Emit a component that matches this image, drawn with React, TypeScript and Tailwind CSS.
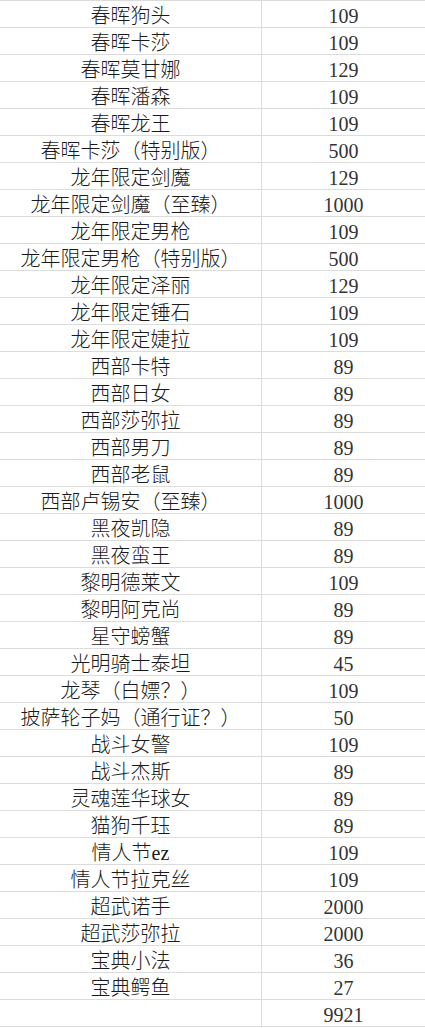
import React from "react";

const rows: [string, string][] = [
  ["春晖狗头", "109"],
  ["春晖卡莎", "109"],
  ["春晖莫甘娜", "129"],
  ["春晖潘森", "109"],
  ["春晖龙王", "109"],
  ["春晖卡莎（特别版）", "500"],
  ["龙年限定剑魔", "129"],
  ["龙年限定剑魔（至臻）", "1000"],
  ["龙年限定男枪", "109"],
  ["龙年限定男枪（特别版）", "500"],
  ["龙年限定泽丽", "129"],
  ["龙年限定锤石", "109"],
  ["龙年限定婕拉", "109"],
  ["西部卡特", "89"],
  ["西部日女", "89"],
  ["西部莎弥拉", "89"],
  ["西部男刀", "89"],
  ["西部老鼠", "89"],
  ["西部卢锡安（至臻）", "1000"],
  ["黑夜凯隐", "89"],
  ["黑夜蛮王", "89"],
  ["黎明德莱文", "109"],
  ["黎明阿克尚", "89"],
  ["星守螃蟹", "89"],
  ["光明骑士泰坦", "45"],
  ["龙琴（白嫖？）", "109"],
  ["披萨轮子妈（通行证？）", "50"],
  ["战斗女警", "109"],
  ["战斗杰斯", "89"],
  ["灵魂莲华球女", "89"],
  ["猫狗千珏", "89"],
  ["情人节ez", "109"],
  ["情人节拉克丝", "109"],
  ["超武诺手", "2000"],
  ["超武莎弥拉", "2000"],
  ["宝典小法", "36"],
  ["宝典鳄鱼", "27"],
  ["", "9921"],
];

export default function App() {
  return (
    <div lang="zh-CN" className="w-[425px] h-[1028px] bg-white overflow-hidden">
      <div className="border-t border-[#dcdcdc]">
        {rows.map(([name, price], i) => (
          <div
            key={i}
            className="grid grid-cols-[262px_1fr] h-[27px] border-b border-[#dcdcdc]"
          >
            <div
              className="flex items-center justify-center pt-[4px] border-r border-[#dcdcdc] text-[20px] leading-[22px] text-[#1a1a1a] font-light whitespace-nowrap"
              style={{ fontFamily: '"Liberation Serif", "Noto Sans CJK SC", serif' }}
            >
              {name}
            </div>
            <div
              className="flex items-center justify-center pt-[3px] text-[20px] leading-[22px] text-[#333]"
              style={{ fontFamily: '"Liberation Serif", serif' }}
            >
              {price}
            </div>
          </div>
        ))}
      </div>
    </div>
  );
}
